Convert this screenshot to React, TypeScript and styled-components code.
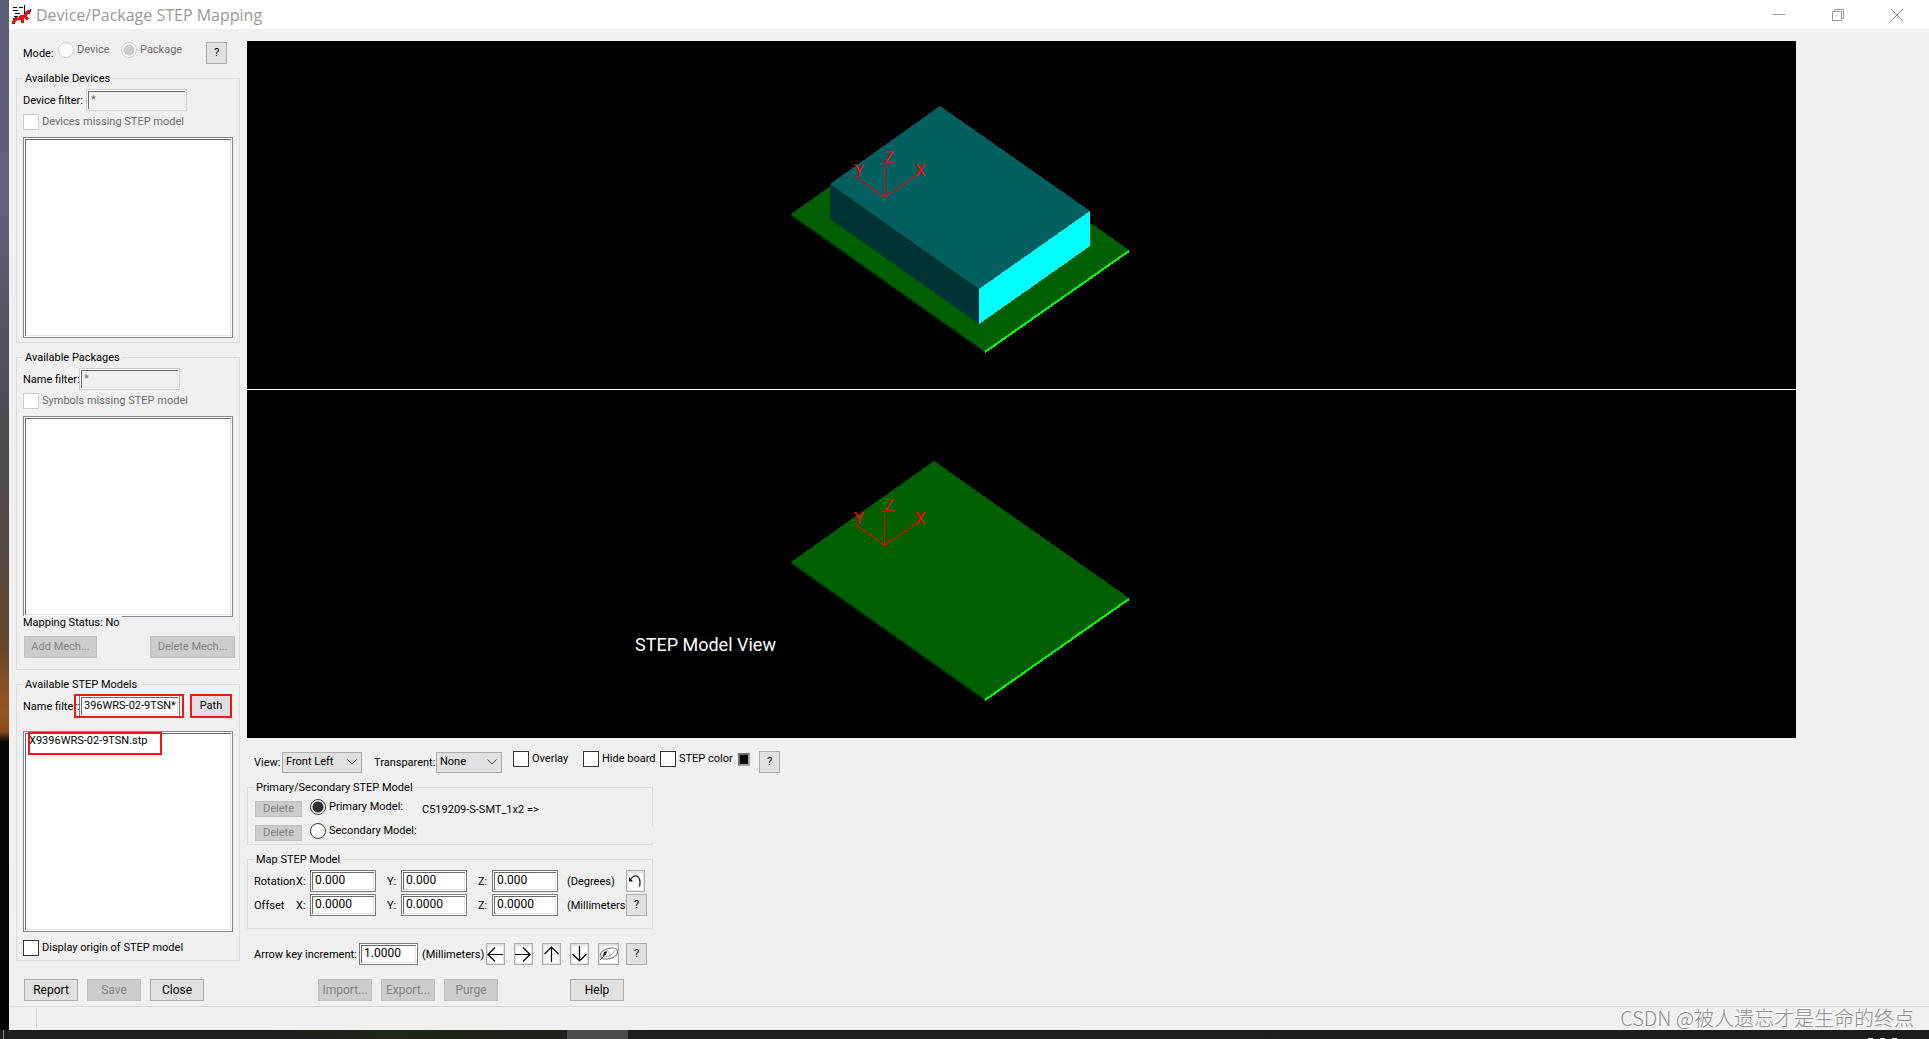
import React from "react";
import styled, { createGlobalStyle } from "styled-components";

const GlobalStyle = createGlobalStyle`
  *, *::before, *::after { box-sizing: border-box; }
  body {
    margin: 0;
    background: #1e1e1e;
    font: 11px/14px Roboto, "Liberation Sans", sans-serif;
    color: #000;
  }
  button, input, select { font: inherit; color: inherit; margin: 0; }
`;

const Screen = styled.div`
  display: flex;
  flex-direction: column;
  min-height: 100vh;
`;

const Desktop = styled.div`
  flex: 1;
  display: flex;
  padding-left: 9px;
  background: linear-gradient(
    #5a5b74 0,
    #62617c 20%,
    #565462 30%,
    #4c4a50 42%,
    #564840 55%,
    #66482c 63%,
    #9a5320 69%,
    #8a4a1e 71%,
    #0a0806 72%,
    #020202 100%
  );
`;

const Window = styled.div`
  flex: 1;
  min-width: 0;
  display: flex;
  flex-direction: column;
  background: #f0f0f0;
`;

const TitleBar = styled.header`
  display: flex;
  align-items: center;
  height: 29px;
  padding: 0 20px 0 3px;
  background: #fff;
`;

const Title = styled.h1`
  flex: 1;
  margin: 0 0 0 4px;
  font: 400 16px/24px "Open Sans", "Noto Sans", sans-serif;
  color: #999;
`;

const CaptionButton = styled.button`
  display: grid;
  place-items: center;
  width: 24px;
  height: 24px;
  margin-left: 35px;
  padding: 0;
  border: 0;
  background: none;
`;

const Content = styled.main`
  flex: 1;
  display: flex;
  gap: 7px;
  padding: 0 133px 5px 7px;
`;

const Sidebar = styled.div`
  flex: none;
  width: 224px;
  display: flex;
  flex-direction: column;
  gap: 7px;
  padding-top: 13px;
`;

const Main = styled.div`
  flex: 1;
  min-width: 0;
  display: flex;
  flex-direction: column;
  padding-top: 12px;
`;

const Row = styled.div<{ $indent?: number; $top?: number; $gap?: number }>`
  display: flex;
  align-items: center;
  gap: ${(p) => p.$gap ?? 0}px;
  padding-left: ${(p) => p.$indent ?? 0}px;
  margin-top: ${(p) => p.$top ?? 0}px;
`;

const Label = styled.label<{ $w?: number }>`
  flex: none;
  width: ${(p) => (p.$w ? `${p.$w}px` : "auto")};
  padding-top: 2px;
  line-height: 16px;
  white-space: nowrap;
`;

const Text = styled.span<{ $w?: number }>`
  flex: none;
  width: ${(p) => (p.$w ? `${p.$w}px` : "auto")};
  padding-top: 2px;
  white-space: nowrap;
`;

const Group = styled.fieldset<{ $bottom: number; $broken?: boolean }>`
  position: relative;
  min-width: 0;
  margin: 0;
  padding: 4px 4px ${(p) => p.$bottom}px 6px;
  border: 1px solid #dcdcdc;

  &::after {
    content: ${(p) => (p.$broken ? '""' : "none")};
    position: absolute;
    right: -1px;
    bottom: 2px;
    width: 1px;
    height: 15px;
    background: #f0f0f0;
  }
`;

const Legend = styled.legend`
  padding: 1px 2px 0;
  line-height: 13px;
`;

const sunken = `
  box-shadow: inset 0 0 0 1px #fff, inset 2px 2px 0 #696969, inset -2px -2px 0 #e3e3e3;
`;

const Field = styled.input<{ $w: number }>`
  flex: none;
  width: ${(p) => p.$w}px;
  height: 22px;
  padding: 0 3px 2px 4px;
  border: 1px solid #7a7a7a;
  border-radius: 0;
  background: #fff;
  outline: none;
  ${sunken}
  &:disabled { border-color: #ccc; background: #f0f0f0; color: #6d6d6d; }
`;

const NumberField = styled(Field)`
  font-size: 12px;
`;

const ListBox = styled.ul<{ $top: number }>`
  width: 210px;
  height: 201px;
  margin: ${(p) => p.$top}px 0 0;
  padding: 2px 5px;
  list-style: none;
  border: 1px solid #828790;
  background: #fff;
  ${sunken}
`;

const ListItem = styled.li`
  display: flex;
  line-height: 14px;
`;

const Marked = styled.span<{ $inset: string }>`
  position: relative;
  display: flex;
  &::after {
    content: "";
    position: absolute;
    inset: ${(p) => p.$inset};
    border: 2px solid #f3141c;
    pointer-events: none;
  }
`;

const Check = styled.label<{ $dim?: boolean; $w?: number }>`
  display: flex;
  gap: 3px;
  flex: none;
  width: ${(p) => (p.$w ? `${p.$w}px` : "auto")};
  height: 16px;
  line-height: 15px;
  white-space: nowrap;
  color: ${(p) => (p.$dim ? "#6d6d6d" : "#000")};
`;

const Tick = styled.input`
  appearance: none;
  flex: none;
  width: 16px;
  height: 16px;
  border: 1px solid #333;
  background: #fff;
  &:disabled { border-color: #ccc; }
  &[type="radio"] { border-radius: 50%; }
  &[type="radio"]:checked {
    background: radial-gradient(circle, #333 0 5px, #fff 6px);
  }
  &[type="radio"]:checked:disabled {
    background: radial-gradient(circle, #ccc 0 5px, #fff 6px);
  }
`;

const Button = styled.button<{ $w: number; $h?: number }>`
  flex: none;
  display: grid;
  place-items: center;
  width: ${(p) => p.$w}px;
  height: ${(p) => p.$h ?? 22}px;
  padding: 0;
  line-height: 14px;
  white-space: nowrap;
  border: 1px solid #adadad;
  background: #e1e1e1;
  &:disabled { border-color: #bfbfbf; background: #ccc; color: #838383; }
`;

const IconButton = styled(Button)`
  background: linear-gradient(#fff, #fff) center / calc(100% - 2px) 17px no-repeat #e1e1e1;
`;

const RadioPair = styled.div`
  display: flex;
  align-self: flex-start;
  width: 144px;
  margin-right: 4px;
`;

const ViewOptions = styled.div`
  display: flex;
  align-self: flex-start;
  align-items: center;
  margin-left: 11px;
`;

const StatusText = styled.div`
  position: relative;
  width: 99px;
  margin-top: -1px;
  background: #f0f0f0;
  white-space: nowrap;
`;

const SelectBox = styled.span<{ $w: number }>`
  position: relative;
  flex: none;
  width: ${(p) => p.$w}px;
  height: 21px;
  svg { position: absolute; right: 5px; top: 7px; pointer-events: none; }
`;

const Select = styled.select`
  appearance: none;
  width: 100%;
  height: 100%;
  padding: 0 0 0 3px;
  border: 1px solid #adadad;
  border-radius: 0;
  background: #e1e1e1;
`;

const Swatch = styled.button`
  width: 12px;
  height: 13px;
  padding: 0;
  border: 2px solid;
  border-color: #6a6a6a #a0a0a0 #a0a0a0 #6a6a6a;
  background: #000;
`;

const Canvas = styled.div`
  flex: 1;
  display: flex;
  flex-direction: column;
  background: #000;
  margin-bottom: 13px;
`;

const Viewport = styled.div`
  flex: 1;
  min-height: 0;
  &:first-child { flex: none; }
  & + & { border-top: 1px solid #fff; }
  svg { display: block; width: 100%; height: 348px; }
`;

const LowerPanel = styled.div`
  width: 406px;
  display: flex;
  flex-direction: column;
  gap: 7px;
  margin-top: 7px;
`;

const ModelRow = styled.div`
  display: flex;
  height: 18px;
  margin: 1px 0 6px 1px;
  align-items: flex-start;
  > button { align-self: flex-end; margin-right: 8px; }
  > span { align-self: flex-end; }
  &:last-child { margin-bottom: 3px; }
`;

const MapGrid = styled.div`
  display: grid;
  grid-template-columns: 42px 14px 77px 14px 77px 14px 75px 59px auto;
  row-gap: 2px;
  align-items: center;
  justify-content: start;
`;

const Footer = styled.div`
  display: flex;
  gap: 9px;
  font-size: 12px;
`;

const SideFooter = styled(Footer)`
  margin-top: 11px;
  padding-left: 8px;
`;

const MainFooter = styled(Footer)`
  margin-top: 14px;
  padding-left: 71px;
  > :last-child { margin-left: 63px; }
`;

const StatusBar = styled.footer`
  position: relative;
  height: 24px;
  border-top: 1px solid #d7d7d7;
  &::before {
    content: "";
    display: block;
    width: 28px;
    height: 21px;
    margin-top: 1px;
    border-right: 1px solid #d7d7d7;
  }
`;

const Watermark = styled.div`
  position: absolute;
  right: 15px;
  top: 0;
  font: 300 20px/22px "Noto Sans CJK SC", sans-serif;
  color: #8e8e8e;
  text-shadow: -1px -1px 0 #fff;
  white-space: nowrap;
`;

const TaskBar = styled.div`
  display: flex;
  align-items: flex-end;
  justify-content: space-between;
  height: 9px;
  padding: 0 31px 0 3px;
  overflow: hidden;
  background: linear-gradient(90deg, #1e1e1e 0, #1e1e1e 14%, #20261a 20%, #1e1f1d 34%, #1c1c1c 100%);
`;

const TaskEdge = styled.i`
  width: 1px;
  height: 9px;
  margin-right: 563px;
  background: #8a8a8a;
`;

const TaskItem = styled.i`
  width: 61px;
  height: 9px;
  margin-right: auto;
  background: #4b4c49;
`;

function AppIcon() {
  return (
    <svg width="20" height="20" viewBox="0 0 20 20" shapeRendering="crispEdges" aria-hidden="true">
      <path d="M1 1H13V16H1z" fill="#f4f4f4" />
      <path d="M1 2.5H5M7 2.5H11M1 5.5H6M3 8.5H8M2 11.5H6M12.5 0V12M9 11.5H13" stroke="#000080" strokeWidth="1.3" fill="none" />
      <path d="M0 18L1 14L5 13L9 10L12 10L14 6L19 4L17 9L14 11L17 14L15 15L12 13L12 18L9 18L9 15L5 15L3 18z" fill="#f01010" />
      <path d="M0 18.5H3M19 4L17 9M1 14L5 12" stroke="#600" strokeWidth="1" />
    </svg>
  );
}

function Axes() {
  return (
    <g>
      <path d="M855 176L884.5 197.5L917 175M884.5 197V166" stroke="#f00" fill="none" shapeRendering="crispEdges" />
      <g fill="#f00" fontFamily="Roboto, sans-serif" fontSize="17">
        <text x="854" y="176">Y</text>
        <text x="884" y="163">Z</text>
        <text x="915" y="176">X</text>
      </g>
    </g>
  );
}

function Board() {
  return (
    <g shapeRendering="crispEdges">
      <polygon points="791,214 985,350 985,353 791,216" fill="#030" />
      <polygon points="934,113 1129,250 985,351 791,214" fill="#006000" />
      <path d="M985 352L1129 251" stroke="#0f0" strokeWidth="2" />
    </g>
  );
}

function PackageBody() {
  return (
    <g shapeRendering="crispEdges">
      <polygon points="940,106 1090,211 979,289 830,184" fill="#006060" />
      <polygon points="830,184 979,289 979,324 830,219" fill="#033" />
      <polygon points="979,289 1090,211 1090,246 979,324" fill="#0ff" />
    </g>
  );
}

const arrowPaths = {
  Left: "M1 8.5H16M8 1.5L1 8.5L8 15.5",
  Right: "M0 8.5H15M8 1.5L15 8.5L8 15.5",
  Up: "M8.5 16V1M1.5 8L8.5 1L15.5 8",
  Down: "M8.5 0V15M1.5 8L8.5 15L15.5 8",
};

function MouseIcon() {
  return (
    <svg width="19" height="17" viewBox="0 0 19 17" fill="none" aria-hidden="true">
      <ellipse cx="10" cy="7.5" rx="9" ry="5.2" transform="rotate(-18 10 7.5)" stroke="#888" strokeWidth="1.2" />
      <path d="M3 9C8 12 13 10 16 4M8 4C10 6 11 8 11 11" stroke="#aaa" />
      <path d="M5 6L8 5L7 9L4 10z" fill="#111" />
      <path d="M1 14L5 10" stroke="#555" />
    </svg>
  );
}

function Help({ about }: { about: string }) {
  return (
    <Button type="button" $w={21} aria-label={`Help: ${about}`}>
      ?
    </Button>
  );
}

function Combo({ id, width, value }: { id: string; width: number; value: string }) {
  return (
    <SelectBox $w={width}>
      <Select id={id} defaultValue={value}>
        <option>{value}</option>
      </Select>
      <svg width="10" height="6" viewBox="0 0 10 6" aria-hidden="true">
        <path d="M.5 .5L5 5L9.5 .5" fill="none" stroke="#444" />
      </svg>
    </SelectBox>
  );
}

function MapRow({ name, value, unit }: { name: string; value: string; unit: string }) {
  return (
    <>
      <Text>{name}</Text>
      {["X", "Y", "Z"].map((axis) => (
        <React.Fragment key={axis}>
          <Label htmlFor={`${name}-${axis}`}>{axis}:</Label>
          <NumberField $w={66} id={`${name}-${axis}`} defaultValue={value} />
        </React.Fragment>
      ))}
      <Text>({unit})</Text>
    </>
  );
}

export default function App() {
  return (
    <Screen>
      <GlobalStyle />
      <Desktop>
        <Window>
          <TitleBar>
            <AppIcon />
            <Title>Device/Package STEP Mapping</Title>
            <CaptionButton type="button" aria-label="Minimize">
              <svg width="12" height="12" stroke="#999"><path d="M0 5.5H12" /></svg>
            </CaptionButton>
            <CaptionButton type="button" aria-label="Restore">
              <svg width="12" height="12" stroke="#999" fill="none">
                <path d="M.5 2.5H9.5V11.5H.5zM2.5 2.5V.5H11.5V9.5H9.5" />
              </svg>
            </CaptionButton>
            <CaptionButton type="button" aria-label="Close window">
              <svg width="12" height="12" stroke="#888"><path d="M0 0L12 12M12 0L0 12" /></svg>
            </CaptionButton>
          </TitleBar>

          <Content>
            <Sidebar>
              <Row $indent={7}>
                <Text $w={35}>Mode:</Text>
                <RadioPair>
                  <Check $dim $w={63}>
                    <Tick type="radio" name="mode" disabled />
                    Device
                  </Check>
                  <Check $dim>
                    <Tick type="radio" name="mode" disabled defaultChecked />
                    Package
                  </Check>
                </RadioPair>
                <Help about="mode" />
              </Row>

              <Group $bottom={4}>
                <Legend>Available Devices</Legend>
                <Row>
                  <Label $w={63} htmlFor="device-filter">Device filter:</Label>
                  <Field $w={101} id="device-filter" disabled defaultValue="*" />
                </Row>
                <Row $top={3}>
                  <Check $dim>
                    <Tick type="checkbox" disabled />
                    Devices missing STEP model
                  </Check>
                </Row>
                <ListBox $top={7} aria-label="Available devices" />
              </Group>

              <Group $bottom={11}>
                <Legend>Available Packages</Legend>
                <Row>
                  <Label $w={56} htmlFor="package-filter">Name filter:</Label>
                  <Field $w={101} id="package-filter" disabled defaultValue="*" />
                </Row>
                <Row $top={3}>
                  <Check $dim>
                    <Tick type="checkbox" disabled />
                    Symbols missing STEP model
                  </Check>
                </Row>
                <ListBox $top={7} aria-label="Available packages" />
                <StatusText>Mapping Status: No</StatusText>
                <Row $top={6} $indent={1} $gap={53}>
                  <Button type="button" $w={73} disabled>Add Mech...</Button>
                  <Button type="button" $w={85} disabled>Delete Mech...</Button>
                </Row>
              </Group>

              <Group $bottom={4}>
                <Legend>Available STEP Models</Legend>
                <Row $gap={11}>
                  <Row>
                    <Label $w={56} htmlFor="model-filter">Name filter:</Label>
                    <Marked $inset="-1px -4px -1px -5px">
                      <Field $w={101} id="model-filter" defaultValue="396WRS-02-9TSN*" />
                    </Marked>
                  </Row>
                  <Marked $inset="-1px">
                    <Button type="button" $w={40}>Path</Button>
                  </Marked>
                </Row>
                <ListBox $top={14} aria-label="Available STEP models">
                  <ListItem>
                    <Marked $inset="-2px -14px -7px -1px">X9396WRS-02-9TSN.stp</Marked>
                  </ListItem>
                </ListBox>
                <Row $top={8}>
                  <Check>
                    <Tick type="checkbox" />
                    Display origin of STEP model
                  </Check>
                </Row>
              </Group>

              <SideFooter>
                <Button type="button" $w={54}>Report</Button>
                <Button type="button" $w={54} disabled>Save</Button>
                <Button type="button" $w={54}>Close</Button>
              </SideFooter>
            </Sidebar>

            <Main>
              <Canvas>
                <Viewport>
                  <svg viewBox="247 41 1549 348" role="img" aria-label="Package view">
                    <Board />
                    <PackageBody />
                    <Axes />
                  </svg>
                </Viewport>
                <Viewport>
                  <svg viewBox="247 42 1549 348" role="img" aria-label="STEP model view">
                    <Board />
                    <Axes />
                    <text x="635" y="303" fill="#fff" fontFamily="Roboto, sans-serif" fontSize="18">
                      STEP Model View
                    </text>
                  </svg>
                </Viewport>
              </Canvas>

              <Row $indent={7}>
                <Label $w={28} htmlFor="view">View:</Label>
                <Combo id="view" width={80} value="Front Left" />
                <Row $indent={12}>
                  <Label $w={62} htmlFor="transparent">Transparent:</Label>
                  <Combo id="transparent" width={66} value="None" />
                </Row>
                <ViewOptions>
                  <Check $w={70}><Tick type="checkbox" />Overlay</Check>
                  <Check $w={77}><Tick type="checkbox" />Hide board</Check>
                  <Check $w={78}><Tick type="checkbox" />STEP color</Check>
                  <Swatch type="button" aria-label="STEP color swatch" />
                </ViewOptions>
                <Row $indent={9}>
                  <Help about="view" />
                </Row>
              </Row>

              <LowerPanel>
                <Group $bottom={0} $broken>
                  <Legend>Primary/Secondary STEP Model</Legend>
                  <ModelRow>
                    <Button type="button" $w={47} $h={16} disabled>Delete</Button>
                    <Check $w={112}>
                      <Tick type="radio" name="model" defaultChecked />
                      Primary Model:
                    </Check>
                    <Text>C519209-S-SMT_1x2 =&gt;</Text>
                  </ModelRow>
                  <ModelRow>
                    <Button type="button" $w={47} $h={16} disabled>Delete</Button>
                    <Check>
                      <Tick type="radio" name="model" />
                      Secondary Model:
                    </Check>
                  </ModelRow>
                </Group>

                <Group $bottom={12}>
                  <Legend>Map STEP Model</Legend>
                  <MapGrid>
                    <MapRow name="Rotation" value="0.000" unit="Degrees" />
                    <IconButton type="button" $w={19} aria-label="Rotate">
                      <svg width="15" height="15" viewBox="0 0 15 15" fill="none" aria-hidden="true">
                        <path d="M2.5 5.5C5 1.5 9 .5 11 4C12.5 7 12.5 9 11.5 12.5" stroke="#222" strokeWidth="1.2" />
                        <path d="M1 3V7.5H5z" fill="#000" />
                      </svg>
                    </IconButton>
                    <MapRow name="Offset" value="0.0000" unit="Millimeters" />
                    <Help about="offset" />
                  </MapGrid>
                </Group>
              </LowerPanel>

              <Row $indent={7} $top={14}>
                <Label $w={105} htmlFor="increment">Arrow key increment:</Label>
                <NumberField $w={59} id="increment" defaultValue="1.0000" />
                <Row $indent={4} $gap={9}>
                  <Text $w={55}>(Millimeters)</Text>
                  {Object.entries(arrowPaths).map(([name, d]) => (
                    <IconButton key={name} type="button" $w={19} aria-label={`Move ${name.toLowerCase()}`}>
                      <svg width="17" height="17" viewBox="0 0 17 17" aria-hidden="true">
                        <path d={d} fill="none" stroke="#000" strokeWidth="1.2" />
                      </svg>
                    </IconButton>
                  ))}
                  <Row $gap={7}>
                    <IconButton type="button" $w={21} aria-label="Move with mouse">
                      <MouseIcon />
                    </IconButton>
                    <Help about="arrow keys" />
                  </Row>
                </Row>
              </Row>

              <MainFooter>
                <Button type="button" $w={54} disabled>Import...</Button>
                <Button type="button" $w={54} disabled>Export...</Button>
                <Button type="button" $w={54} disabled>Purge</Button>
                <Button type="button" $w={54}>Help</Button>
              </MainFooter>
            </Main>
          </Content>

          <StatusBar>
            <Watermark>CSDN @被人遗忘才是生命的终点</Watermark>
          </StatusBar>
        </Window>
      </Desktop>
      <TaskBar>
        <TaskEdge />
        <TaskItem />
        <svg width="30" height="1" fill="#ddd" aria-hidden="true">
          <path d="M0 0H5V2H0zM12 0H17V2H12zM24 0H29V2H24z" />
        </svg>
      </TaskBar>
    </Screen>
  );
}
